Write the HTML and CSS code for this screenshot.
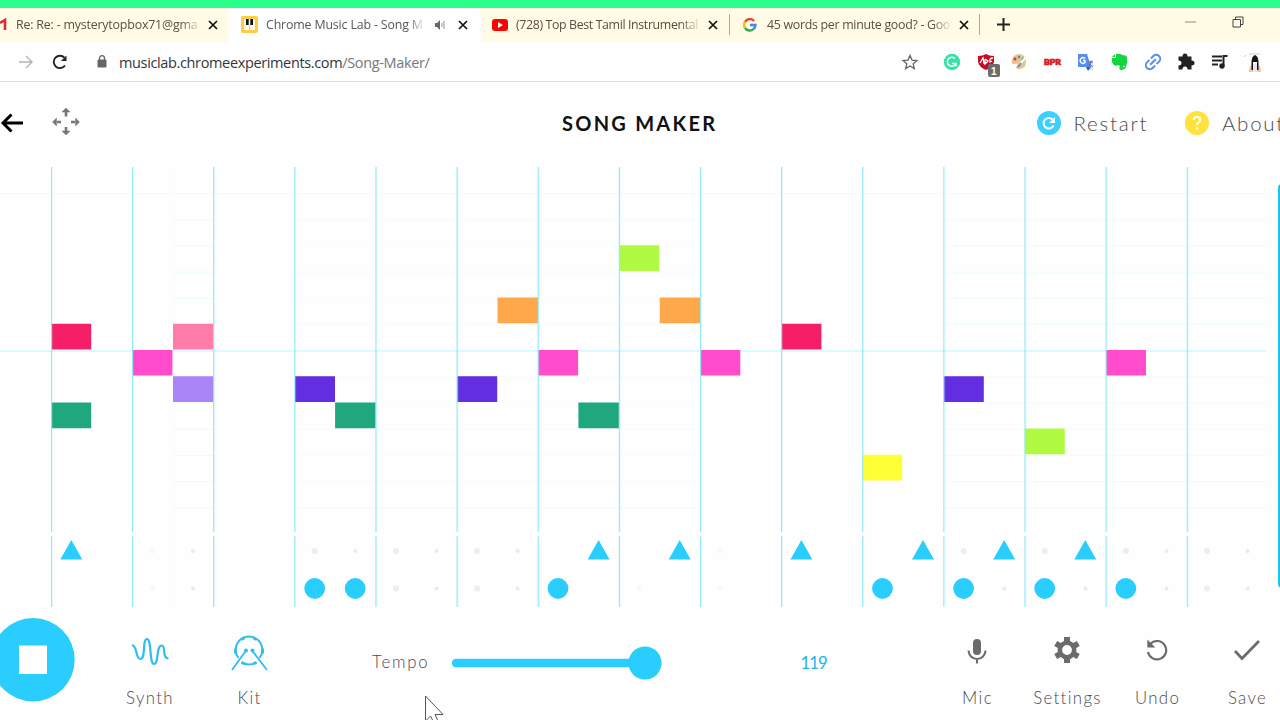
FILE: index.html
```html
<!DOCTYPE html>
<html lang="en">
<head>
<meta charset="utf-8">
<title>Chrome Music Lab - Song Maker</title>
<link rel="stylesheet" href="styles.css">
</head>
<body>
<div class="frame-strip"></div>
<nav class="tabs">
  <div class="tab tab-mail">
    <svg class="gmail" width="8" height="14" viewBox="0 0 8 14"><path d="M0 5 5 2V12" fill="none" stroke="#d92d3a" stroke-width="2.6"/></svg>
    <span class="tab-title mail-title">Re: Re: - mysterytopbox71@gma</span>
    <svg class="close" viewBox="0 0 10 10"><path d="m1 1 8 8M9 1 1 9"/></svg>
  </div>
  <div class="tab tab-active">
    <svg width="17" height="17" viewBox="0 0 17 17"><rect width="17" height="17" rx="2" fill="#fc4"/><path d="M3 3h11v11H3z" fill="#fffbe8"/><path d="M5 3h2.700v6H5zM9.300 3H12v6H9.300z" fill="#111"/><path d="M8.500 9v5" stroke="#fc4"/></svg>
    <span class="tab-title active-title">Chrome Music Lab - Song M</span>
    <svg class="speaker" width="12" height="10" viewBox="0 0 12 10"><path d="M1 3h2l3-3v10L3 7H1z" fill="#666"/><path d="M8 3v4M10 1v8" stroke="#999"/></svg>
    <svg class="close" viewBox="0 0 10 10"><path d="m1 1 8 8M9 1 1 9"/></svg>
  </div>
  <div class="tab tab-video">
    <svg width="16" height="12" viewBox="0 0 16 12"><rect width="16" height="12" rx="3" fill="#f00"/><path d="m6 3 5 3-5 3z" fill="#fff"/></svg>
    <span class="tab-title video-title">(728) Top Best Tamil Instrumental</span>
    <svg class="close" viewBox="0 0 10 10"><path d="m1 1 8 8M9 1 1 9"/></svg>
  </div>
  <div class="tab tab-search">
    <svg width="14" height="14" viewBox="0 0 14 14" fill="none" stroke-width="2.4"><path d="M2 4A5.5 5.5 0 0 1 11 3" stroke="#ea4335"/><path d="M2 4a5.5 5.5 0 0 0 0 6" stroke="#fbbc05"/><path d="M2 10a5.5 5.5 0 0 0 8.500 1" stroke="#34a853"/><path d="M7 7h5.500a5.500 5.500 0 0 1-2 4" stroke="#4285f4"/></svg>
    <span class="tab-title search-title">45 words per minute good? - Goo</span>
    <svg class="close" viewBox="0 0 10 10"><path d="m1 1 8 8M9 1 1 9"/></svg>
  </div>
  <svg class="new-tab" width="13" height="13" viewBox="0 0 13 13"><path d="M6.500 0v13M0 6.500h13" stroke="#222" stroke-width="2"/></svg>
  <svg class="minimise" width="11" height="2"><path d="M0 1h11" stroke="#888"/></svg>
  <svg class="restore" width="12" height="12" viewBox="0 0 12 12" fill="none" stroke="#444"><path d="M1 3.500h7.500V11H1zM3.500 3.500V1H11v7.500H8.500"/></svg>
</nav>
<div class="address">
  <svg class="forward" width="14" height="14" viewBox="0 0 14 14" fill="none" stroke="#b5b5b5" stroke-width="1.4"><path d="M0 7h13M7 1l6 6-6 6"/></svg>
  <svg class="reload" width="16" height="16" viewBox="0 0 16 16"><path d="M13 11.500A6.200 6.200 0 1 1 12.500 3.700" fill="none" stroke="#222" stroke-width="1.900"/><path d="M14.500 1.500v5.500H9z" fill="#222"/></svg>
  <svg class="lock" width="10" height="13" viewBox="0 0 10 13"><rect x=".5" y="4.500" width="9" height="8" rx="1" fill="#666"/><path d="M2.500 5V3.200a2.500 2.500 0 0 1 5 0V5" fill="none" stroke="#666" stroke-width="1.300"/></svg>
  <span class="url">musiclab.chromeexperiments.com<span class="path">/Song-Maker/</span></span>
  <svg class="extensions" width="380" height="38" viewBox="900 43 380 38">
    <path d="m910 55.500 2 4.600 5 .4-3.800 3.300 1.100 4.800-4.300-2.600-4.300 2.600 1.100-4.800-3.800-3.300 5-.4z" fill="none" stroke="#666" stroke-width="1.300"/>
    <circle cx="952" cy="62" r="8.200" fill="#34e3a5"/><path d="M955 58.500a4.500 4.500 0 1 0 1 5h-4M956 63.500v3" fill="none" stroke="#fff" stroke-width="1.500"/>
    <path d="M978 56q5 0 8-2 3 2 8 2v6q-1 5-8 8-7-3-8-8z" fill="#c70d24"/><path d="m980 63 3-5 1 6m1-5v5l3-3-3-2m8-1q-4 0-3 4l2-1" fill="none" stroke="#fff" stroke-width="1.300"/>
    <rect x="988" y="64" width="12" height="13" rx="2" fill="#6c6c6c"/>
    <text x="991" y="74.500" class="badge">1</text>
    <path d="M1012 60q1-6 8-6 6 1 6 8 0 7-7 7-4 0-3-3 0-2-3-2-2-1-1-4z" fill="#e5c493"/><g><circle cx="1015" cy="59" r="1.500" fill="#d53b3b"/><circle cx="1019" cy="57" r="1.300" fill="#4c8de0"/><circle cx="1023" cy="59" r="1.500" fill="#4fa055"/><circle cx="1016" cy="65" r="1.600" fill="#fff"/></g><path d="m1026 57-7 8" stroke="#fff" stroke-width="2"/><path d="m1021 63-3 4" stroke="#6a8fa5" stroke-width="2"/>
    <text x="1044" y="65" class="bpr" textLength="17" lengthAdjust="spacingAndGlyphs">BPR</text>
    <path d="M1085 60h8v10h-6z" fill="#dce3eb"/><path d="M1078 54h9l4 13h-12q-1 0-1-1z" fill="#588df0"/><path d="m1086 67 5 0-3 4z" fill="#2c5ecb"/><path d="M1085 58.500a2.800 2.800 0 1 0 0 4v-2h-2" fill="none" stroke="#fff" stroke-width="1.300"/><path d="M1088 62h5m-2-1v1q0 2-2 4m0-2 4 3" stroke="#668" fill="none"/>
    <path d="M1112 58h4v-4q4-1 6 1 5 0 5 3 1 4-1 9-1 3-5 3-3-1-1-4l-2-1q-3 2-5-1-2-3-1-6z" fill="#13d53c"/><path d="m1112 57 3-3v3z" fill="#13d53c"/><path d="M1122.500 67q2-2 2 0" stroke="#fff" fill="none"/>
    <g fill="none" stroke="#5990ee" stroke-width="2" transform="rotate(-45 1153 62)"><path d="M1152 58h-3.500a4 4 0 0 0 0 8h3.500M1154 58h3.500a4 4 0 0 1 0 8H1154M1149 62h8"/></g>
    <path d="M1179 57h4q0-3 2.500-3t2.500 3h4v4q3 0 3 2.500t-3 2.500v4h-4q0-3-2.500-3t-2.500 3h-4v-4q3 0 3-2.500T1179 61z" fill="#202124" transform="translate(-.5 -.5)"/>
    <path d="M1212 56.500h10M1212 60.500h10M1212 64.500h6M1223.500 66v-10h4" fill="none" stroke="#222" stroke-width="2"/><circle cx="1222" cy="66" r="2.700" fill="#222"/>
    <path d="M1249 72q0-7 4-8h4q4 1 4 8z" fill="#f1c7a4"/><path d="M1251.500 70v-7q0-7 3.500-8 3.500 1 3.500 8v7h-1.500v-8h-4v8z" fill="#151515"/><path d="M1253 64h4v8h-4z" fill="#e5e8f5"/><path d="m1244 57 2-2M1249 54h11" stroke="#ccc"/>
  </svg>
</div>
<header class="app-header">
  <svg class="header-left" width="90" height="82" viewBox="0 82 90 82"><path d="M23 123H3m8.500-8.500L3 123l8.500 8.500" fill="none" stroke="#000" stroke-width="3"/><g fill="#777" stroke="#777"><path d="m62 112 4-4 4 4zM62 131l4 4 4-4zM56.500 118v8l-4-4zM75.500 118v8l4-4z" stroke-width=".5"/><path d="M66 112v4.500M66 127v4M57 122h4M71 122h4" stroke-width="2.600"/></g></svg>
  <h1>SONG MAKER</h1>
  <div class="header-actions">
    <svg width="24" height="24" viewBox="0 0 24 24"><circle cx="12" cy="12" r="12" fill="#3dcfff"/><path d="M16.500 14.500A5.200 5.200 0 1 1 15.500 8.500" fill="none" stroke="#fff" stroke-width="2"/><path d="M18 6v6h-6z" fill="#fff"/></svg>
    <span class="restart">Restart</span>
    <svg width="24" height="24" viewBox="0 0 24 24"><circle cx="12" cy="12" r="12" fill="#ffe23b"/><path d="M8.800 9q0-3.200 3.300-3.200 3 0 3 2.800 0 1.800-1.500 2.700-1.600.8-1.600 3" fill="none" stroke="#fff" stroke-width="2"/><circle cx="12" cy="17.500" r="1.300" fill="#fff"/></svg>
    <span class="about">About</span>
  </div>
</header>
<main class="board">
  <svg width="1280" height="450" viewBox="0 164 1280 450">
    <defs>
      <pattern id="beats" x="50.900" y="0" width="81.130" height="10" patternUnits="userSpaceOnUse"><rect width="1.200" height="10" fill="#8ce8f6"/></pattern>
      <pattern id="rows" x="0" y="167" width="10" height="26.170" patternUnits="userSpaceOnUse"><rect width="10" height="1" fill="#e9fcfd"/></pattern>
    </defs>
    <g fill="url(#rows)"><rect x="173" y="180" width="41" height="340"/><rect x="295" y="180" width="406" height="340" opacity=".5"/><rect x="943" y="180" width="323" height="340" opacity=".8"/></g>
    <path d="M0 193.500h1266M295 507.500h406M943 507.500h322" stroke="#effcfd"/>
    <path d="M173.500 167v440" stroke="#f6fdfe"/>
    <path d="M0 351h1266" stroke="#cff8fb" stroke-width="1.400"/>
    <g class="notes">
      <path fill="#f71e68" d="M51.200 323.700h40v25.800h-40zM781.400 323.700h40v25.800h-40z"/>
      <path fill="#ff7da8" d="M173 323.700h40.500v25.800H173z"/>
      <path fill="#ff4bcc" d="M132.400 350h40v25.500h-40zM538.100 350h40v25.500h-40zM700.300 350h40v25.500h-40zM1106 350h40v25.500h-40z"/>
      <path fill="#a985f8" d="M173 376.200h40.500V402H173z"/>
      <path fill="#632de1" d="M295 376.200h40V402h-40zM457.200 376.200h40V402h-40zM943.800 376.200h40V402h-40z"/>
      <path fill="#20a77e" d="M51.200 402.500h40v25.700h-40zM335.100 402.500h40.500v25.700h-40.500zM578.400 402.500h40.500v25.700h-40.500z"/>
      <path fill="#ffa74b" d="M497.500 297.500H538v25.700h-40.500zM659.700 297.500h40.500v25.700h-40.500z"/>
      <path fill="#b0fa42" d="M619.200 245.200h40V271h-40zM1024.800 428.600h40v25.700h-40z"/>
      <path fill="#ffff35" d="M862.700 454.800h39.500v25.700h-39.500z"/>
    </g>
    <rect x="50.900" y="167" width="1140" height="365" fill="url(#beats)"/>
    <rect x="50.900" y="536" width="1140" height="71" fill="url(#beats)"/>
    <g fill="none" stroke-linecap="round">
      <path d="M314.700 551H520M396 588.500H520M963.700 551H1210M1207 588.500H1210" stroke="#ededed" stroke-width="6" stroke-dasharray="0 81.130"/>
      <path d="M355.300 551H520M193 551h1M193 588.500h1M436.500 588.500H520M1166.500 551H1260M1004.300 588.500H1260" stroke="#e8eaeb" stroke-width="4" stroke-dasharray="0 81.130"/>
      <path d="M152.500 551h1M152.500 588.500h1M720 551h1M639 588.500H790" stroke="#f8f8f8" stroke-width="5" stroke-dasharray="0 81.130"/>
    </g>
    <path fill="#29ceff" d="m71.300 540 11 19.500h-22zM598.600 540l11 19.500h-22zM679.700 540l11 19.500h-22zM801.400 540l11 19.500h-22zM923 540l11 19.500h-22zM1004.200 540l11 19.500h-22zM1085.300 540l11 19.500h-22z"/>
    <g fill="#29ceff"><circle cx="314.700" cy="588.500" r="10.400"/><circle cx="355.200" cy="588.500" r="10.400"/><circle cx="558" cy="588.500" r="10.400"/><circle cx="882.500" cy="588.500" r="10.400"/><circle cx="963.600" cy="588.500" r="10.400"/><circle cx="1044.700" cy="588.500" r="10.400"/><circle cx="1125.800" cy="588.500" r="10.400"/></g>
    <rect x="1278" y="184" width="8" height="404" rx="4" fill="#18c4f1"/>
  </svg>
</main>
<footer class="controls">
  <svg class="stop" width="75" height="84" viewBox="0 0 75 84"><circle cx="33" cy="41.700" r="41.700" fill="#29ceff"/><path d="M19 27.500h28v28.500H19z" fill="#fff"/></svg>
  <div class="tool synth">
    <svg viewBox="0 0 40 40"><path d="M2 13C8 14.500 5 27 10.500 27S12 7 17 7s2 25 7 25 2-18.500 7.500-18.500S31 26 38.500 26.500" fill="none" stroke="#2fbeee" stroke-width="2.200"/></svg>
    <span>Synth</span>
  </div>
  <div class="tool kit">
    <svg viewBox="0 0 40 40" fill="none" stroke="#2fbeee"><path d="M9.500 26A13.300 13.300 0 1 1 30.500 26M12.500 30.500Q20 34.500 27.500 30.500" stroke-width="2"/><path d="m12.500 7.500 3-1.500M24.500 6l3 1.500M6.300 16.500v5M33.700 16.500v5M12.500 30.500l3.500 1.200M24 31.700l3.500-1.200" stroke-width="2.600"/><path d="M17 18.500 3 38M23 18.500l15 19.500" stroke-width="1.800"/><circle cx="17" cy="18.500" r="2" fill="#2fbeee" stroke="none"/><circle cx="23.500" cy="18.500" r="2" fill="#2fbeee" stroke="none"/></svg>
    <span>Kit</span>
  </div>
  <div class="tempo">
    <span class="tempo-label">Tempo</span>
    <svg width="212" height="36" viewBox="0 0 212 36"><path d="M6 18h188" stroke="#29ceff" stroke-width="8.500" stroke-linecap="round"/><circle cx="195" cy="18" r="16.600" fill="#29ceff"/></svg>
    <span class="tempo-value">119</span>
  </div>
  <div class="tool mic">
    <svg viewBox="0 0 40 40"><rect x="16" y="7" width="8" height="16" rx="4" fill="#6b6b6b"/><path d="M11.500 18.500a8.500 8.500 0 0 0 17 0M20 27v4.500" fill="none" stroke="#6b6b6b" stroke-width="2"/></svg>
    <span>Mic</span>
  </div>
  <div class="tool settings">
    <svg viewBox="0 0 40 40"><g stroke="#6b6b6b"><circle cx="20" cy="18" r="7.200" fill="none" stroke-width="4.600"/><path d="M20 5v5M20 26v5M8.700 11.500l4.500 2.500M26.800 22l4.500 2.500M8.700 24.500l4.500-2.500M26.800 14l4.500-2.500" stroke-width="6"/></g></svg>
    <span>Settings</span>
  </div>
  <div class="tool undo">
    <svg viewBox="0 0 40 40"><path d="M11 20a9.200 9.200 0 1 0 2.200-8" fill="none" stroke="#6b6b6b" stroke-width="2.100"/><path d="M10.300 7.500v8h8z" fill="#6b6b6b"/></svg>
    <span>Undo</span>
  </div>
  <div class="tool save">
    <svg viewBox="0 0 40 40"><path d="m8 19 7 7.500L32 9" fill="none" stroke="#6b6b6b" stroke-width="2.700"/></svg>
    <span>Save</span>
  </div>
</footer>
<svg class="cursor" width="20" height="26" viewBox="0 0 20 26"><path d="M.5 1v25l5-5 4 8 4-2-3.500-7.500H18z" fill="#fff" stroke="#555"/></svg>
</body>
</html>
```
FILE: styles.css
```css
* { box-sizing: border-box; }
body {
  margin: 0;
  width: 1280px;
  height: 720px;
  overflow: hidden;
  position: relative;
  background: #fefefe;
  font-family: Lato, sans-serif;
  color: #6b6b6b;
}
svg { display: block; flex: none; }
.frame-strip { height: 7.5px; background: #2bff8b; }
.tabs {
  display: flex;
  align-items: center;
  height: 34.5px;
  background: #fffbe5;
  font: 12.4px "Open Sans", sans-serif;
  color: #5d4c43;
}
.tab { display: flex; align-items: center; height: 100%; flex: none; }
.tab-mail { width: 228px; }
.gmail { margin-right: 8px; }
.tab-active { width: 253px; padding-left: 13px; background: #fefefe; border-radius: 6px 6px 0 0; color: #55585b; }
.tab-video { width: 249px; padding-left: 11px; }
.tab-search { width: 250px; padding-left: 13px; }
.tab-video, .tab-search { background: linear-gradient(#aaa, #aaa) right center / 1px 21px no-repeat; }
.tab-title {
  white-space: nowrap;
  flex: none;
  mask-image: linear-gradient(90deg, #000 90%, rgba(0, 0, 0, .15));
}
.mail-title { width: 183px; letter-spacing: -.19px; }
.active-title { width: 157px; margin-left: 8px; letter-spacing: -.16px; }
.video-title { width: 183px; margin-left: 8px; letter-spacing: -.38px; }
.search-title { width: 183px; margin-left: 10px; letter-spacing: -.3px; }
.close { width: 10px; height: 10px; margin-left: 9px; fill: none; stroke: #111; stroke-width: 1.7; }
.speaker { margin-left: 11px; }
.speaker + .close { margin-left: 12px; }
.new-tab { margin-left: 17px; }
.minimise { margin: -6px 0 0 175px; }
.restore { margin: -5px 0 0 36px; }
.address {
  display: flex;
  align-items: center;
  height: 40px;
  border-bottom: 1px solid #dedede;
}
.forward { margin-left: 19px; }
.reload { margin-left: 19px; }
.lock { margin-left: 29px; }
.url { width: 780px; margin: 1px 0 0 12px; font: 14.5px "Open Sans", sans-serif; letter-spacing: -.36px; color: #333639; }
.path { color: #75787c; }
.extensions { margin-left: 1px; }
.badge { font: bold 10px "Liberation Sans", sans-serif; fill: #fff; }
.bpr { font: 900 7.5px Lato, sans-serif; fill: #dc1919; stroke: #dc1919; stroke-width: .7px; }
.app-header { display: flex; align-items: center; height: 82px; }
h1 { flex: none; width: 160px; margin: 0 0 0 472px; font: bold 20px Lato, sans-serif; letter-spacing: 2.25px; color: #111; white-space: nowrap; }
.header-actions { display: flex; align-items: center; margin-left: 314.500px; font-size: 20.500px; font-weight: 300; letter-spacing: 1.75px; flex: none; color: #4c4c4c; }
.header-actions span { margin-top: -1px; }
.restart { width: 111.500px; margin-left: 13px; }
.about { margin-left: 13px; }
.board { height: 450px; }
.controls { display: flex; height: 106px; align-items: flex-start; }
.stop { margin-top: 4px; }
.tool { width: 90px; display: flex; flex-direction: column; align-items: center; padding-top: 18px; font-size: 16.8px; font-weight: 300; letter-spacing: 1.35px; flex: none; color: #4c4c4c; }
.tool svg { width: 40px; height: 40px; }
.tool span { margin-top: 15.500px; line-height: 20px; padding-left: 1px; }
.synth { margin-left: 29.500px; }
.kit { margin-left: 9.500px; }
.tempo { display: flex; flex: none; width: 638px; align-items: center; padding: 31px 0 0 78px; font-size: 16.800px; font-weight: 300; letter-spacing: 1.800px; color: #4c4c4c; }
.tempo-label { width: 77.500px; margin-top: -3px; }
.tempo-value { margin: -1px 0 0 139px; color: #1fb4ea; letter-spacing: -1px; font-weight: 400; }
.cursor { position: absolute; left: 425px; top: 695px; }
```
